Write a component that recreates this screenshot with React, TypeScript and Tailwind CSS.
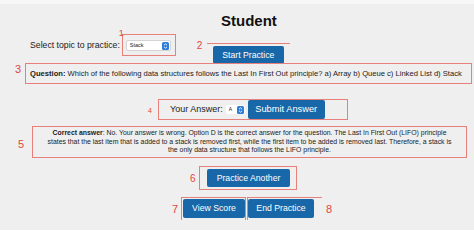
import React from "react";

function Mark({ n, className }: { n: string; className: string }) {
  return (
    <span className={`absolute leading-none text-[#e2463f] ${className}`}>{n}</span>
  );
}

function Stepper() {
  return (
    <svg width="7" height="8" viewBox="0 0 7 8" className="shrink-0">
      <rect x="0" y="0" width="7" height="8" rx="1.6" fill="#2f7ddb" />
      <path d="M2 3.2 L3.5 1.8 L5 3.2" stroke="#fff" strokeWidth="0.9" fill="none" />
      <path d="M2 4.8 L3.5 6.2 L5 4.8" stroke="#fff" strokeWidth="0.9" fill="none" />
    </svg>
  );
}

function Btn({ label, className }: { label: string; className: string }) {
  return (
    <button
      className={`flex items-center justify-center rounded-[2px] bg-[#1867a8] text-white text-[8.7px] leading-none ${className}`}
    >
      {label}
    </button>
  );
}

export default function App() {
  return (
    <div className="w-[474px] h-[249px] bg-white overflow-hidden font-['Liberation_Sans',Arial,sans-serif] text-[#222]">
      <div className="h-[230px] bg-[#efefef] border-t-[4px] border-[#f7f7f7] flex flex-col">
        {/* Title */}
        <h1 className="mt-[9px] ml-[221px] h-[15px] text-[15px] font-bold leading-none text-[#111]">
          Student
        </h1>

        {/* Topic row */}
        <div className="mt-[6px] h-[29px] flex items-start">
          <span className="ml-[30px] mt-[5px] text-[8.7px] leading-[12px] whitespace-nowrap">
            Select topic to practice:
          </span>
          <div className="relative ml-[2px] w-[54px] h-[22px] border border-[#e77f7b] pl-[3px] pt-[5px]">
            <Mark n="1" className="-left-[4px] -top-[6px] text-[9px]" />
            <div className="w-[45px] h-[11px] bg-white rounded-[2px] border border-[#d4d4d4] flex items-center justify-between pl-[3px] pr-[1px]">
              <span className="text-[5.5px] leading-none">Stack</span>
              <Stepper />
            </div>
          </div>
          <div className="relative ml-[31px] mt-[9px]">
            <Mark n="2" className="-left-[10px] -top-[2px] text-[10px]" />
            <div className="w-[83px] border-t border-[#e77f7b]" />
            <Btn label="Start Practice" className="mt-[2px] ml-[6px] w-[71px] h-[18px]" />
          </div>
        </div>

        {/* Question */}
        <div className="relative ml-[25px] w-[447px] h-[21px] border border-[#e77f7b] flex items-center pl-[4px]">
          <Mark n="3" className="-left-[11px] top-0 text-[11px]" />
          <p className="text-[7.6px] leading-none whitespace-nowrap">
            <b>Question:</b> Which of the following data structures follows the Last In First Out principle? a) Array b) Queue c) Linked List d) Stack
          </p>
        </div>

        {/* Answer row */}
        <div className="relative mt-[15px] ml-[158px] w-[190px] h-[21px] border border-[#e77f7b] flex items-center pl-[11px]">
          <Mark n="4" className="-left-[11px] top-[7px] text-[7px]" />
          <span className="text-[9px] leading-none whitespace-nowrap">Your Answer:</span>
          <div className="ml-[3px] w-[19px] h-[9px] bg-white rounded-[2px] flex items-center justify-between pl-[3px] pr-[1px]">
            <span className="text-[5px] leading-none">A</span>
            <Stepper />
          </div>
          <Btn label="Submit Answer" className="ml-[3px] w-[77px] h-[19px] text-[9.3px]" />
        </div>

        {/* Feedback */}
        <div className="relative mt-[6px] ml-[32px] w-[435px] h-[32px] border border-[#e77f7b] flex items-center justify-center">
          <Mark n="5" className="-left-[15px] top-[12px] text-[11px]" />
          <p className="text-[6.9px] leading-[8.5px] text-center whitespace-nowrap">
            <b>Correct answer</b>: No. Your answer is wrong. Option D is the correct answer for the question. The Last In First Out (LIFO) principle
            <br />
            states that the last item that is added to a stack is removed first, while the first item to be added is removed last. Therefore, a stack is
            <br />
            the only data structure that follows the LIFO principle.
          </p>
        </div>

        {/* Practice another */}
        <div className="relative mt-[8px] ml-[199px] w-[98px] h-[24px] border border-[#e77f7b] pl-[7px] pt-[2px]">
          <Mark n="6" className="-left-[10px] top-[7px] text-[10px]" />
          <Btn label="Practice Another" className="w-[83px] h-[18px]" />
        </div>

        {/* Score / end */}
        <div className="mt-[7px] ml-[181px] flex">
          <div className="relative w-[65px] h-[23px] border-t border-l border-r border-[#e77f7b] pl-[1px] pt-[1px]">
            <Mark n="7" className="-left-[10px] top-[6px] text-[11px]" />
            <Btn label="View Score" className="w-[62px] h-[19px]" />
          </div>
          <div className="relative ml-[1px] w-[75px] h-[23px] border-t border-l border-[#e77f7b] pt-[1px]">
            <Mark n="8" className="left-[78px] top-[6px] text-[11px]" />
            <Btn label="End Practice" className="w-[66px] h-[19px]" />
          </div>
        </div>
      </div>
    </div>
  );
}
